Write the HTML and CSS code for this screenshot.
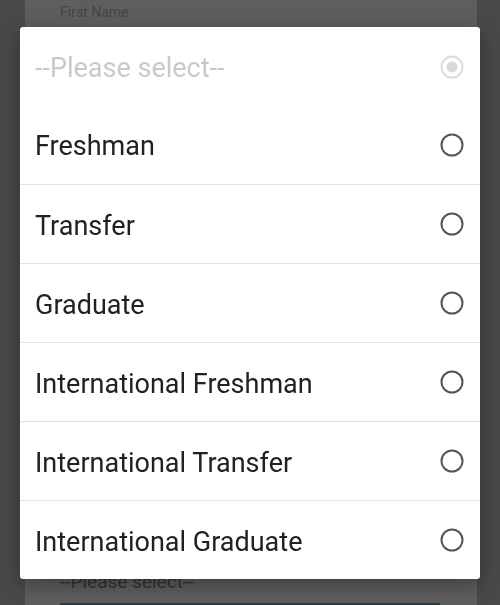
FILE: index.html
```html
<!DOCTYPE html>
<html lang="en">
<head>
    <meta charset="UTF-8">
    <meta name="viewport" content="width=device-width, initial-scale=1.0">
    <title>Application type</title>
    <link rel="stylesheet" href="styles.css">
</head>
<body>

<div class="form-panel">
    <label class="field-label">First Name</label>
    <div class="field-spacer"></div>
    <div class="select-value">--Please select--</div>
    <div class="submit-bar"></div>
</div>

<div class="dialog">
    <div class="option option-placeholder">
        <span>--Please select--</span>
        <svg class="radio" width="24" height="24" viewBox="0 0 24 24">
            <circle cx="12" cy="12" r="10.5" fill="none" stroke="#dcdcdc" stroke-width="2"/>
            <circle cx="12" cy="12" r="5.5" fill="#d9d9d9"/>
        </svg>
    </div>
    <div class="option option-first">
        <span>Freshman</span>
        <svg class="radio" width="24" height="24" viewBox="0 0 24 24"><circle cx="12" cy="12" r="10.5" fill="none" stroke="#555" stroke-width="2"/></svg>
    </div>
    <div class="option">
        <span>Transfer</span>
        <svg class="radio" width="24" height="24" viewBox="0 0 24 24"><circle cx="12" cy="12" r="10.5" fill="none" stroke="#555" stroke-width="2"/></svg>
    </div>
    <div class="option">
        <span>Graduate</span>
        <svg class="radio" width="24" height="24" viewBox="0 0 24 24"><circle cx="12" cy="12" r="10.5" fill="none" stroke="#555" stroke-width="2"/></svg>
    </div>
    <div class="option">
        <span>International Freshman</span>
        <svg class="radio" width="24" height="24" viewBox="0 0 24 24"><circle cx="12" cy="12" r="10.5" fill="none" stroke="#555" stroke-width="2"/></svg>
    </div>
    <div class="option">
        <span>International Transfer</span>
        <svg class="radio" width="24" height="24" viewBox="0 0 24 24"><circle cx="12" cy="12" r="10.5" fill="none" stroke="#555" stroke-width="2"/></svg>
    </div>
    <div class="option">
        <span>International Graduate</span>
        <svg class="radio" width="24" height="24" viewBox="0 0 24 24"><circle cx="12" cy="12" r="10.5" fill="none" stroke="#555" stroke-width="2"/></svg>
    </div>
</div>

</body>
</html>
```

FILE: styles.css
```css
* {
    margin: 0;
    padding: 0;
    box-sizing: border-box;
}

html, body {
    height: 100%;
    width: 100%;
    overflow: hidden;
    font-family: Roboto, "Noto Sans", sans-serif;
    background-color: #494949;
}

/* page behind the dim */
.form-panel {
    margin: 0 23px 0 25px;
    height: 100%;
    background-color: #5e5e5e;
    display: flex;
    flex-direction: column;
    padding: 4px 37px 0 35px;
}

.form-panel > * {
    flex: none;
}

.field-label {
    display: block;
    font-size: 14px;
    line-height: 17px;
    color: #454545;
}

.field-spacer {
    height: 550px;
}

.select-value {
    font-size: 19px;
    line-height: 22px;
    color: #333;
}

.submit-bar {
    margin-top: 10px;
    height: 10px;
    background-color: #2c3c47;
}

/* the picker */
.dialog {
    position: fixed;
    top: 27px;
    left: 20px;
    width: 460px;
    background: #fff;
    border-radius: 3px;
    box-shadow: 0 6px 20px rgba(0, 0, 0, 0.35);
    overflow: hidden;
}

.option {
    height: 79px;
    display: flex;
    align-items: center;
    justify-content: space-between;
    padding: 3px 16px 0 15px;
    border-top: 1px solid #e0e0e0;
    font-size: 27px;
    color: #212121;
}

.option .radio {
    flex: none;
    margin-top: -3px;
}

.option-placeholder {
    height: 78px;
    border-top: none;
    color: #c9c9c9;
    padding-top: 4px;
}

.option-first {
    border-top: none;
}
```
